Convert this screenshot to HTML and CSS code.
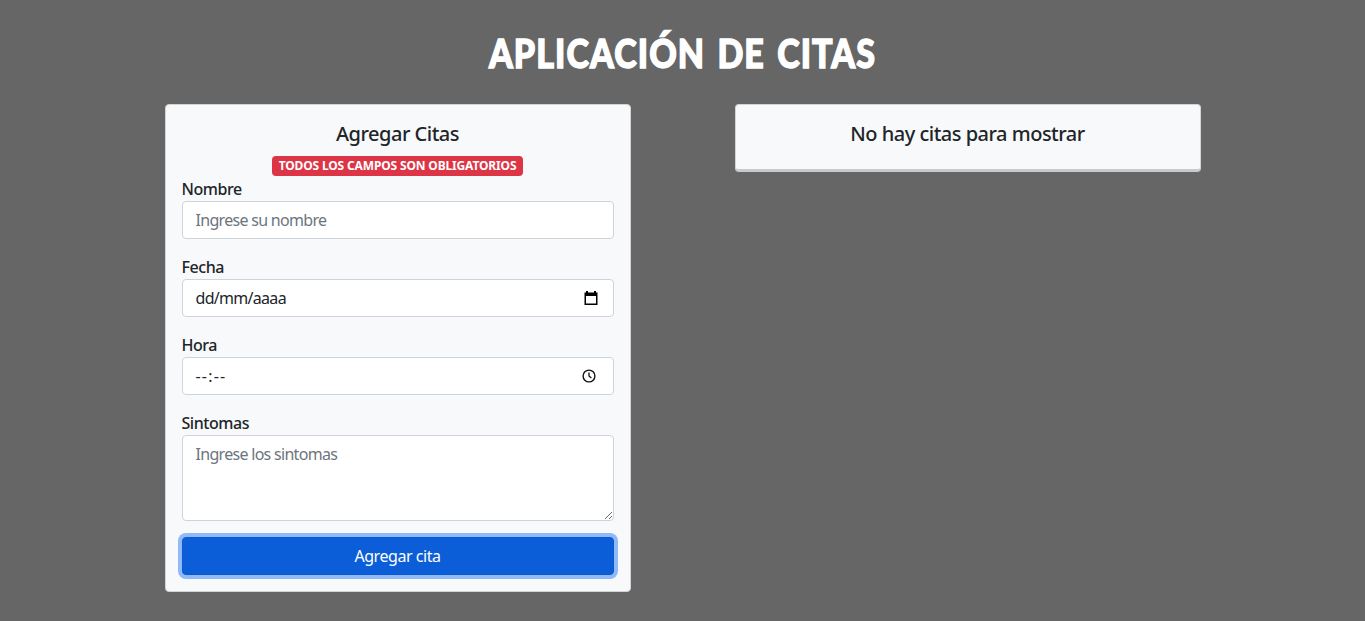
FILE: index.html
```html
<!DOCTYPE html>
<html lang="es">
<head>
<meta charset="utf-8">
<title>Aplicación de citas</title>
<link rel="stylesheet" href="styles.css">
</head>
<body>
<header class="page-head"><h1 class="page-title">APLICACIÓN DE CITAS</h1></header>
<main class="columns">
  <form class="card card-form">
    <h2 class="card-title">Agregar Citas</h2>
    <div class="badge-row"><span class="badge">TODOS LOS CAMPOS SON OBLIGATORIOS</span></div>
    <div class="field">
      <label class="field-label" for="nombre">Nombre</label>
      <div class="control"><input class="control-input" id="nombre" type="text" placeholder="Ingrese su nombre"></div>
    </div>
    <div class="field">
      <label class="field-label" for="fecha">Fecha</label>
      <div class="control">
        <input class="control-input" id="fecha" type="text" value="dd/mm/aaaa">
        <svg class="control-icon" viewBox="0 0 16 16" width="16" height="16" aria-hidden="true"><path fill="#000" d="M3 1h2v1.500h6V1h2v1.500h1.500V15h-13V2.500H3zM3 6v7.500h10V6z"/></svg>
      </div>
    </div>
    <div class="field">
      <label class="field-label" for="hora">Hora</label>
      <div class="control">
        <input class="control-input input-time" id="hora" type="text" value="--:--">
        <svg class="control-icon icon-clock" viewBox="0 0 16 16" width="16" height="16" aria-hidden="true"><circle cx="8" cy="8" r="5.900" fill="none" stroke="#111" stroke-width="1.400"/><path d="M8 4.500V8l2.400 2" fill="none" stroke="#111" stroke-width="1.300"/></svg>
      </div>
    </div>
    <div class="field">
      <label class="field-label" for="sintomas">Sintomas</label>
      <textarea class="textarea" id="sintomas" placeholder="Ingrese los sintomas"></textarea>
    </div>
    <button class="submit" type="button">Agregar cita</button>
  </form>
  <section class="card card-empty">
    <h2 class="card-title">No hay citas para mostrar</h2>
  </section>
</main>
</body>
</html>
```
FILE: styles.css
```css
* { box-sizing: border-box; }
html, body { margin: 0; }
body {
  background: #666;
  color: #212529;
  font-family: "Noto Sans", "Open Sans", sans-serif;
  font-size: 16px;
  line-height: 24px;
  height: 621px;
  overflow: hidden;
}
.page-head {
  height: 104px;
  padding-top: 27px;
  text-align: center;
}
.page-title {
  display: inline-block;
  margin: 0;
  color: #fff;
  font-family: "Lato", sans-serif;
  font-weight: 900;
  font-size: 34px;
  line-height: 50px;
  letter-spacing: 1.100px;
  word-spacing: 3px;
  -webkit-text-stroke: 1.200px #fff;
  transform: scaleY(1.200);
}
.columns {
  display: flex;
  justify-content: center;
  align-items: flex-start;
  gap: 104px;
}
.card {
  width: 466px;
  background: #f8f9fa;
  border: 1px solid #d3d4d5;
  border-radius: 4px;
  padding: 16px;
}
.card-form { height: 488px; }
.card-empty {
  height: 68px;
  border-bottom: 3px solid #c9cacb;
}
.card-title {
  margin: 0;
  text-align: center;
  font-size: 20px;
  font-weight: 500;
  line-height: 26px;
  letter-spacing: -0.500px;
}
.badge-row {
  display: flex;
  justify-content: center;
  margin-top: 9px;
  height: 21px;
}
.badge {
  background: #dc3545;
  color: #fff;
  border-radius: 4px;
  height: 20px;
  padding: 0 7px;
  font-size: 12px;
  font-weight: 700;
  line-height: 20px;
  letter-spacing: -0.150px;
  white-space: nowrap;
}
.field { margin-bottom: 16px; }
.field-label {
  display: block;
  height: 24px;
  font-weight: 500;
  letter-spacing: -0.450px;
}
.control {
  display: flex;
  align-items: center;
  height: 38px;
  background: #fff;
  border: 1px solid #ced4da;
  border-radius: 4px;
  padding: 0 14px 0 12px;
}
.control-input {
  flex: 1;
  min-width: 0;
  border: 0;
  outline: 0;
  padding: 0;
  background: transparent;
  color: #212529;
  font: inherit;
  letter-spacing: -0.700px;
  text-indent: 1px;
}
.input-time { letter-spacing: 1.200px; }
.control-input::placeholder, .textarea::placeholder { color: #6c757d; opacity: 1; }
.control-icon { flex: none; }
.icon-clock { margin-right: 2px; }
.textarea {
  display: block;
  width: 100%;
  height: 86px;
  background: #fff;
  border: 1px solid #ced4da;
  border-radius: 4px;
  padding: 6px 12px 6px 13px;
  color: #212529;
  font: inherit;
  letter-spacing: -0.700px;
  outline: 0;
}
.submit {
  display: block;
  width: 100%;
  height: 38px;
  background: #0b5ed7;
  border: 1px solid #0a58ca;
  border-radius: 4px;
  box-shadow: 0 0 0 4px #8fb9f8;
  color: #fff;
  font: inherit;
  letter-spacing: -0.450px;
}
```
